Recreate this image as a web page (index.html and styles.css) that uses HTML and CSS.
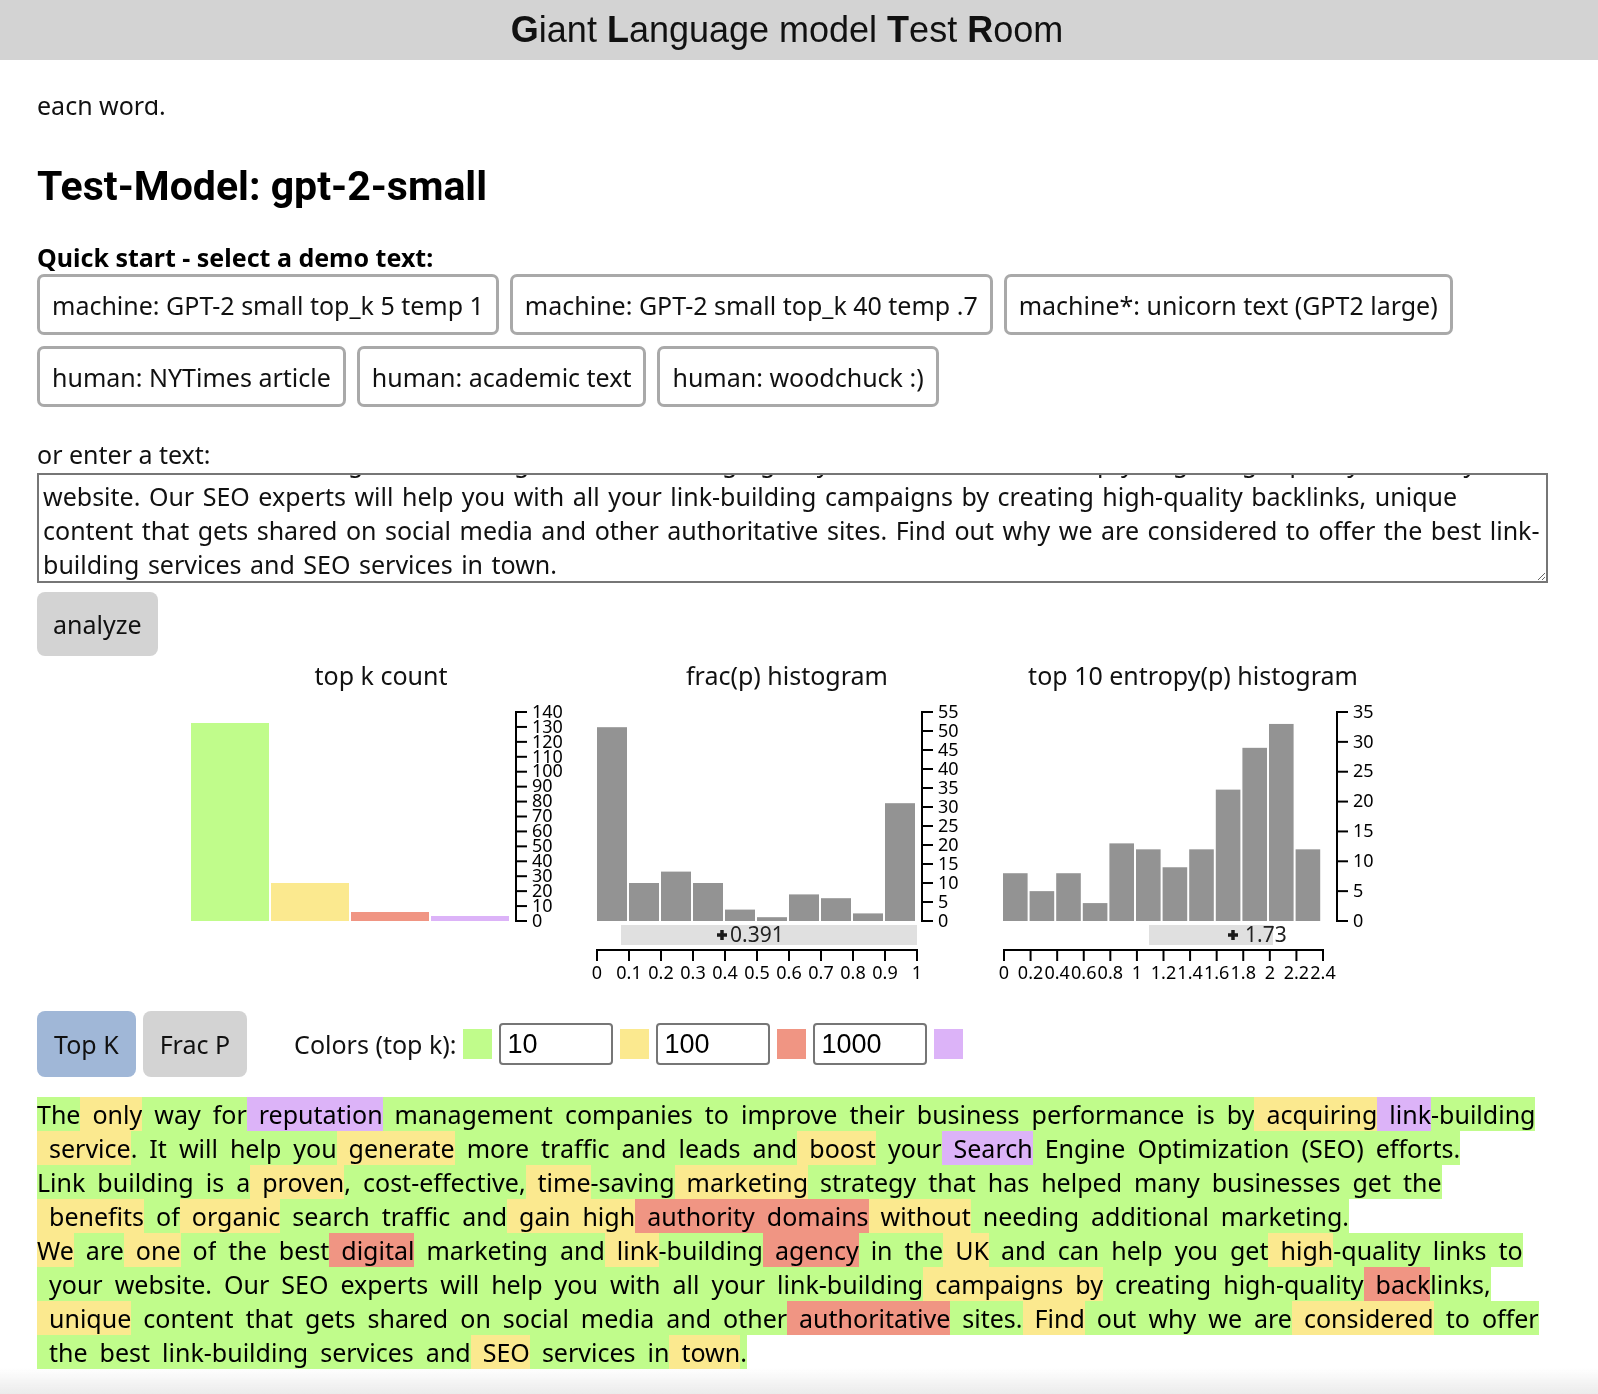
FILE: index.html
```html
<!DOCTYPE html>
<html lang="en">
<head>
<meta charset="utf-8">
<title>Giant Language model Test Room</title>
<link rel="stylesheet" href="styles.css">
</head>
<body>
<header class="top-bar"><h1 class="app-title"><b>G</b>iant <b>L</b>anguage model <b>T</b>est <b>R</b>oom</h1></header>

<main class="page">
  <div class="intro-clip"><p class="intro-text">each word.</p></div>

  <h2 class="model-title">Test-Model: gpt-2-small</h2>

  <div class="quick-label">Quick start - select a demo text:</div>
  <div class="demo-list">
    <button class="demo-btn">machine: GPT-2 small top_k 5 temp 1</button>
    <button class="demo-btn">machine: GPT-2 small top_k 40 temp .7</button>
    <button class="demo-btn">machine*: unicorn text (GPT2 large)</button>
    <button class="demo-btn">human: NYTimes article</button>
    <button class="demo-btn">human: academic text</button>
    <button class="demo-btn">human: woodchuck :)</button>
  </div>

  <div class="enter-label">or enter a text:</div>
  <textarea class="text-input">The only way for reputation management companies to improve their business performance is by acquiring link-building service. It will help you generate more traffic and leads and boost your Search Engine Optimization (SEO) efforts.
Link building is a proven, cost-effective, time-saving marketing strategy that has helped many businesses get the benefits of organic search traffic and gain high authority domains without needing additional marketing.
We are one of the best digital marketing and link-building agency in the UK and can help you get high-quality links to your website. Our SEO experts will help you with all your link-building campaigns by creating high-quality backlinks, unique content that gets shared on social media and other authoritative sites. Find out why we are considered to offer the best link-building services and SEO services in town.</textarea>
  <button class="analyze-btn">analyze</button>

  <section class="charts">
    <div class="chart">
      <div class="chart-title">top k count</div>
      <svg class="chart-svg" width="406" height="300" viewBox="0 0 406 300">
        <rect x="13" y="31" width="78" height="198" fill="#c0fc8b"/>
        <rect x="93" y="191" width="78" height="38" fill="#fbe98f"/>
        <rect x="173" y="220" width="78" height="9" fill="#f09583"/>
        <rect x="253" y="224" width="78" height="5" fill="#dcb3f8"/>
        <g class="axis" transform="translate(338,0)">
          <path d="M11,20H0V229H11"/>
          <line x2="11" y1="229" y2="229"/><text x="16" y="229" dy="0.32em">0</text>
          <line x2="11" y1="214.07" y2="214.07"/><text x="16" y="214.07" dy="0.32em">10</text>
          <line x2="11" y1="199.14" y2="199.14"/><text x="16" y="199.14" dy="0.32em">20</text>
          <line x2="11" y1="184.21" y2="184.21"/><text x="16" y="184.21" dy="0.32em">30</text>
          <line x2="11" y1="169.29" y2="169.29"/><text x="16" y="169.29" dy="0.32em">40</text>
          <line x2="11" y1="154.36" y2="154.36"/><text x="16" y="154.36" dy="0.32em">50</text>
          <line x2="11" y1="139.43" y2="139.43"/><text x="16" y="139.43" dy="0.32em">60</text>
          <line x2="11" y1="124.5" y2="124.5"/><text x="16" y="124.5" dy="0.32em">70</text>
          <line x2="11" y1="109.57" y2="109.57"/><text x="16" y="109.57" dy="0.32em">80</text>
          <line x2="11" y1="94.64" y2="94.64"/><text x="16" y="94.64" dy="0.32em">90</text>
          <line x2="11" y1="79.71" y2="79.71"/><text x="16" y="79.71" dy="0.32em">100</text>
          <line x2="11" y1="64.79" y2="64.79"/><text x="16" y="64.79" dy="0.32em">110</text>
          <line x2="11" y1="49.86" y2="49.86"/><text x="16" y="49.86" dy="0.32em">120</text>
          <line x2="11" y1="34.93" y2="34.93"/><text x="16" y="34.93" dy="0.32em">130</text>
          <line x2="11" y1="20" y2="20"/><text x="16" y="20" dy="0.32em">140</text>
        </g>
      </svg>
    </div>

    <div class="chart">
      <div class="chart-title">frac(p) histogram</div>
      <svg class="chart-svg" width="406" height="300" viewBox="0 0 406 300">
        <g class="bars">
          <rect x="13" y="35.2" width="30" height="193.8"/>
          <rect x="45" y="191" width="30" height="38"/>
          <rect x="77" y="179.6" width="30" height="49.4"/>
          <rect x="109" y="191" width="30" height="38"/>
          <rect x="141" y="217.6" width="30" height="11.4"/>
          <rect x="173" y="225.2" width="30" height="3.8"/>
          <rect x="205" y="202.4" width="30" height="26.6"/>
          <rect x="237" y="206.2" width="30" height="22.8"/>
          <rect x="269" y="221.4" width="30" height="7.6"/>
          <rect x="301" y="111.2" width="30" height="117.8"/>
        </g>
        <g class="axis" transform="translate(338,0)">
          <path d="M11,20H0V229H11"/>
          <line x2="11" y1="229" y2="229"/><text x="16" y="229" dy="0.32em">0</text>
          <line x2="11" y1="210" y2="210"/><text x="16" y="210" dy="0.32em">5</text>
          <line x2="11" y1="191" y2="191"/><text x="16" y="191" dy="0.32em">10</text>
          <line x2="11" y1="172" y2="172"/><text x="16" y="172" dy="0.32em">15</text>
          <line x2="11" y1="153" y2="153"/><text x="16" y="153" dy="0.32em">20</text>
          <line x2="11" y1="134" y2="134"/><text x="16" y="134" dy="0.32em">25</text>
          <line x2="11" y1="115" y2="115"/><text x="16" y="115" dy="0.32em">30</text>
          <line x2="11" y1="96" y2="96"/><text x="16" y="96" dy="0.32em">35</text>
          <line x2="11" y1="77" y2="77"/><text x="16" y="77" dy="0.32em">40</text>
          <line x2="11" y1="58" y2="58"/><text x="16" y="58" dy="0.32em">45</text>
          <line x2="11" y1="39" y2="39"/><text x="16" y="39" dy="0.32em">50</text>
          <line x2="11" y1="20" y2="20"/><text x="16" y="20" dy="0.32em">55</text>
        </g>
        <rect class="mean-bar" x="37" y="233" width="296" height="20"/>
        <path class="mean-mark" d="M136.25,238h3.5v3.25h3.25v3.5h-3.25v3.25h-3.5v-3.25h-3.25v-3.5h3.25z"/>
        <text class="mean-text" x="146" y="250">0.391</text>
        <g class="axis axis-x" transform="translate(0,258)">
          <path d="M13,11V0H333V11"/>
          <line x1="13" x2="13" y2="11"/><text x="13" y="16" dy="0.71em">0</text>
          <line x1="45" x2="45" y2="11"/><text x="45" y="16" dy="0.71em">0.1</text>
          <line x1="77" x2="77" y2="11"/><text x="77" y="16" dy="0.71em">0.2</text>
          <line x1="109" x2="109" y2="11"/><text x="109" y="16" dy="0.71em">0.3</text>
          <line x1="141" x2="141" y2="11"/><text x="141" y="16" dy="0.71em">0.4</text>
          <line x1="173" x2="173" y2="11"/><text x="173" y="16" dy="0.71em">0.5</text>
          <line x1="205" x2="205" y2="11"/><text x="205" y="16" dy="0.71em">0.6</text>
          <line x1="237" x2="237" y2="11"/><text x="237" y="16" dy="0.71em">0.7</text>
          <line x1="269" x2="269" y2="11"/><text x="269" y="16" dy="0.71em">0.8</text>
          <line x1="301" x2="301" y2="11"/><text x="301" y="16" dy="0.71em">0.9</text>
          <line x1="333" x2="333" y2="11"/><text x="333" y="16" dy="0.71em">1</text>
        </g>
      </svg>
    </div>

    <div class="chart">
      <div class="chart-title">top 10 entropy(p) histogram</div>
      <svg class="chart-svg" width="406" height="300" viewBox="0 0 406 300">
        <g class="bars">
          <rect x="13" y="181.23" width="24.6" height="47.77"/>
          <rect x="39.6" y="199.14" width="24.6" height="29.86"/>
          <rect x="66.2" y="181.23" width="24.6" height="47.77"/>
          <rect x="92.8" y="211.09" width="24.6" height="17.91"/>
          <rect x="119.4" y="151.37" width="24.6" height="77.63"/>
          <rect x="146" y="157.34" width="24.6" height="71.66"/>
          <rect x="172.6" y="175.26" width="24.6" height="53.74"/>
          <rect x="199.2" y="157.34" width="24.6" height="71.66"/>
          <rect x="225.8" y="97.63" width="24.6" height="131.37"/>
          <rect x="252.4" y="55.83" width="24.6" height="173.17"/>
          <rect x="279" y="31.94" width="24.6" height="197.06"/>
          <rect x="305.6" y="157.34" width="24.6" height="71.66"/>
        </g>
        <g class="axis" transform="translate(347,0)">
          <path d="M11,20H0V229H11"/>
          <line x2="11" y1="229" y2="229"/><text x="16" y="229" dy="0.32em">0</text>
          <line x2="11" y1="199.14" y2="199.14"/><text x="16" y="199.14" dy="0.32em">5</text>
          <line x2="11" y1="169.29" y2="169.29"/><text x="16" y="169.29" dy="0.32em">10</text>
          <line x2="11" y1="139.43" y2="139.43"/><text x="16" y="139.43" dy="0.32em">15</text>
          <line x2="11" y1="109.57" y2="109.57"/><text x="16" y="109.57" dy="0.32em">20</text>
          <line x2="11" y1="79.71" y2="79.71"/><text x="16" y="79.71" dy="0.32em">25</text>
          <line x2="11" y1="49.86" y2="49.86"/><text x="16" y="49.86" dy="0.32em">30</text>
          <line x2="11" y1="20" y2="20"/><text x="16" y="20" dy="0.32em">35</text>
        </g>
        <rect class="mean-bar" x="159" y="233" width="124" height="20"/>
        <path class="mean-mark" d="M241.25,238h3.5v3.25h3.25v3.5h-3.25v3.25h-3.5v-3.25h-3.25v-3.5h3.25z"/>
        <text class="mean-text" x="255" y="250">1.73</text>
        <g class="axis axis-x" transform="translate(0,258)">
          <path d="M14,11V0H333V11"/>
          <line x1="14" x2="14" y2="11"/><text x="14" y="16" dy="0.71em">0</text>
          <line x1="40.58" x2="40.58" y2="11"/><text x="40.58" y="16" dy="0.71em">0.2</text>
          <line x1="67.17" x2="67.17" y2="11"/><text x="67.17" y="16" dy="0.71em">0.4</text>
          <line x1="93.75" x2="93.75" y2="11"/><text x="93.75" y="16" dy="0.71em">0.6</text>
          <line x1="120.33" x2="120.33" y2="11"/><text x="120.33" y="16" dy="0.71em">0.8</text>
          <line x1="146.92" x2="146.92" y2="11"/><text x="146.92" y="16" dy="0.71em">1</text>
          <line x1="173.5" x2="173.5" y2="11"/><text x="173.5" y="16" dy="0.71em">1.2</text>
          <line x1="200.08" x2="200.08" y2="11"/><text x="200.08" y="16" dy="0.71em">1.4</text>
          <line x1="226.67" x2="226.67" y2="11"/><text x="226.67" y="16" dy="0.71em">1.6</text>
          <line x1="253.25" x2="253.25" y2="11"/><text x="253.25" y="16" dy="0.71em">1.8</text>
          <line x1="279.83" x2="279.83" y2="11"/><text x="279.83" y="16" dy="0.71em">2</text>
          <line x1="306.42" x2="306.42" y2="11"/><text x="306.42" y="16" dy="0.71em">2.2</text>
          <line x1="333" x2="333" y2="11"/><text x="333" y="16" dy="0.71em">2.4</text>
        </g>
      </svg>
    </div>
  </section>

  <div class="mode-row">
    <button class="mode-btn active">Top K</button>
    <button class="mode-btn">Frac P</button>
    <div class="legend">
      <span class="legend-label">Colors (top k):</span>
      <span class="swatch sw-g"></span>
      <input class="thresh" type="text" value="10">
      <span class="swatch sw-y"></span>
      <input class="thresh" type="text" value="100">
      <span class="swatch sw-r"></span>
      <input class="thresh" type="text" value="1000">
      <span class="swatch sw-p"></span>
    </div>
  </div>

  <div class="tokens">
<span class="t g">The</span><span class="t y"> only</span><span class="t g"> way</span><span class="t g"> for</span><span class="t p"> reputation</span><span class="t g"> management</span><span class="t g"> companies</span><span class="t g"> to</span><span class="t g"> improve</span><span class="t g"> their</span><span class="t g"> business</span><span class="t g"> performance</span><span class="t g"> is</span><span class="t g"> by</span><span class="t y"> acquiring</span><span class="t p"> link</span><span class="t g">-building</span><br>
<span class="t y"> service</span><span class="t g">.</span><span class="t g"> It</span><span class="t g"> will</span><span class="t g"> help</span><span class="t g"> you</span><span class="t y"> generate</span><span class="t g"> more</span><span class="t g"> traffic</span><span class="t g"> and</span><span class="t g"> leads</span><span class="t g"> and</span><span class="t y"> boost</span><span class="t g"> your</span><span class="t p"> Search</span><span class="t g"> Engine</span><span class="t g"> Optimization</span><span class="t g"> (</span><span class="t g">SEO</span><span class="t g">)</span><span class="t g"> efforts</span><span class="t g">.</span><br>
<span class="t g">Link</span><span class="t g"> building</span><span class="t g"> is</span><span class="t g"> a</span><span class="t y"> proven</span><span class="t g">,</span><span class="t g"> cost</span><span class="t g">-</span><span class="t g">effective</span><span class="t g">,</span><span class="t y"> time</span><span class="t g">-</span><span class="t g">saving</span><span class="t y"> marketing</span><span class="t g"> strategy</span><span class="t g"> that</span><span class="t g"> has</span><span class="t g"> helped</span><span class="t g"> many</span><span class="t g"> businesses</span><span class="t g"> get</span><span class="t g"> the</span><br>
<span class="t y"> benefits</span><span class="t g"> of</span><span class="t y"> organic</span><span class="t g"> search</span><span class="t g"> traffic</span><span class="t g"> and</span><span class="t y"> gain</span><span class="t y"> high</span><span class="t r"> authority</span><span class="t r"> domains</span><span class="t y"> without</span><span class="t g"> needing</span><span class="t g"> additional</span><span class="t g"> marketing</span><span class="t g">.</span><br>
<span class="t y">We</span><span class="t g"> are</span><span class="t y"> one</span><span class="t g"> of</span><span class="t g"> the</span><span class="t g"> best</span><span class="t r"> digital</span><span class="t g"> marketing</span><span class="t g"> and</span><span class="t y"> link</span><span class="t g">-</span><span class="t g">building</span><span class="t r"> agency</span><span class="t g"> in</span><span class="t g"> the</span><span class="t y"> UK</span><span class="t g"> and</span><span class="t g"> can</span><span class="t g"> help</span><span class="t g"> you</span><span class="t g"> get</span><span class="t y"> high</span><span class="t g">-</span><span class="t g">quality</span><span class="t g"> links</span><span class="t g"> to</span><br>
<span class="t g"> your</span><span class="t g"> website</span><span class="t g">.</span><span class="t g"> Our</span><span class="t g"> SEO</span><span class="t g"> experts</span><span class="t g"> will</span><span class="t g"> help</span><span class="t g"> you</span><span class="t g"> with</span><span class="t g"> all</span><span class="t g"> your</span><span class="t g"> link</span><span class="t g">-</span><span class="t g">building</span><span class="t y"> campaigns</span><span class="t y"> by</span><span class="t g"> creating</span><span class="t g"> high</span><span class="t g">-</span><span class="t g">quality</span><span class="t r"> back</span><span class="t g">links</span><span class="t g">,</span><br>
<span class="t y"> unique</span><span class="t g"> content</span><span class="t g"> that</span><span class="t g"> gets</span><span class="t g"> shared</span><span class="t g"> on</span><span class="t g"> social</span><span class="t g"> media</span><span class="t g"> and</span><span class="t g"> other</span><span class="t r"> authoritative</span><span class="t g"> sites</span><span class="t g">.</span><span class="t y"> Find</span><span class="t g"> out</span><span class="t g"> why</span><span class="t g"> we</span><span class="t g"> are</span><span class="t y"> considered</span><span class="t g"> to</span><span class="t g"> offer</span><br>
<span class="t g"> the</span><span class="t g"> best</span><span class="t g"> link</span><span class="t g">-</span><span class="t g">building</span><span class="t g"> services</span><span class="t g"> and</span><span class="t y"> SEO</span><span class="t g"> services</span><span class="t g"> in</span><span class="t y"> town</span><span class="t g">.</span>
  </div>
</main>

<div class="bottom-fade"></div>
<script src="script.js"></script>
</body>
</html>
```

FILE: styles.css
```css
html, body {
  margin: 0;
  padding: 0;
  background: #fff;
}

body {
  font-family: "Noto Sans", Roboto, sans-serif;
  font-size: 25px;
  line-height: 34px;
  color: #111;
  overflow: hidden;
}

.top-bar {
  height: 60px;
  background: #d3d3d3;
  display: flex;
  align-items: center;
  justify-content: center;
  padding-right: 24px;
}

.app-title {
  margin: 0;
  font-family: "Liberation Sans", Arial, sans-serif;
  font-size: 36px;
  font-weight: 400;
  line-height: 40px;
  color: #111;
}

.app-title b {
  font-weight: 700;
}

.page {
  padding: 0 50px 0 37px;
}

.intro-clip {
  margin-top: 40px;
  height: 22px;
  overflow: hidden;
  display: flex;
  align-items: flex-end;
}

.intro-text {
  margin: 0;
  flex-shrink: 0;
  line-height: 34px;
}

.model-title {
  margin: 39px 0 0;
  font-family: Roboto, "Noto Sans", sans-serif;
  font-size: 41px;
  font-weight: 700;
  line-height: 50px;
  color: #000;
}

.quick-label {
  margin-top: 29px;
  font-weight: 700;
  color: #000;
}

.demo-list {
  display: flex;
  flex-wrap: wrap;
  gap: 11px;
}

.demo-btn {
  height: 61px;
  padding: 0 12px;
  border: 3px solid #a9a9a9;
  border-radius: 7px;
  background: #fff;
  font: inherit;
  color: #111;
}

.enter-label {
  margin-top: 30px;
}

.text-input {
  display: block;
  box-sizing: border-box;
  width: 100%;
  height: 110px;
  margin-top: 2px;
  padding: 2px 4px 0;
  border: 2px solid #767676;
  border-radius: 0;
  font: inherit;
  line-height: 34px;
  word-spacing: 2px;
  color: #111;
}

.analyze-btn {
  display: block;
  height: 64px;
  margin-top: 9px;
  padding: 0 16px;
  border: none;
  border-radius: 8px;
  background: #d3d3d3;
  font: inherit;
  color: #111;
}

.charts {
  display: flex;
  margin-top: 2px;
  padding-left: 141px;
}

.chart {
  width: 406px;
  display: flex;
  flex-direction: column;
  align-items: center;
}

.chart-title {
  height: 34px;
  line-height: 34px;
  color: #111;
}

.chart-svg {
  display: block;
  font-family: "Noto Sans", Roboto, sans-serif;
  font-size: 18px;
}

.chart-svg .bars rect {
  fill: #939393;
}

.axis path,
.axis line {
  fill: none;
  stroke: #000;
  stroke-width: 2;
}

.axis text {
  fill: #000;
}

.axis-x text {
  text-anchor: middle;
}

.mean-bar {
  fill: #e0e0e0;
}

.mean-mark {
  fill: #1a1a1a;
}

.mean-text {
  fill: #222;
  font-size: 21px;
}

.mode-row {
  display: flex;
  align-items: center;
  gap: 7px;
  height: 66px;
  margin-top: 19px;
}

.mode-btn {
  height: 66px;
  padding: 0 17px;
  border: none;
  border-radius: 8px;
  background: #d3d3d3;
  font: inherit;
  color: #111;
}

.mode-btn.active {
  background: #a0b7d7;
}

.legend {
  display: flex;
  align-items: center;
  gap: 7px;
  margin-left: 40px;
}

.swatch {
  display: block;
  width: 29px;
  height: 30px;
}

.sw-g { background: #c0fc8b; }
.sw-y { background: #fbe98f; }
.sw-r { background: #f09583; }
.sw-p { background: #dcb3f8; }

.thresh {
  box-sizing: border-box;
  width: 114px;
  height: 42px;
  padding: 0 6px;
  border: 2px solid #767676;
  border-radius: 4px;
  font-family: "Liberation Sans", Arial, sans-serif;
  font-size: 27px;
  color: #000;
}

.tokens {
  margin-top: 20px;
  white-space: nowrap;
  line-height: 34px;
  color: #000;
}

.t {
  display: inline-block;
  vertical-align: top;
  height: 34px;
  white-space: pre;
  word-spacing: 5.5px;
}

.t.g { background: #c0fc8b; }
.t.y { background: #fbe98f; }
.t.r { background: #f09583; }
.t.p { background: #dcb3f8; }

.bottom-fade {
  position: fixed;
  left: 0;
  right: 0;
  bottom: 0;
  height: 26px;
  background: linear-gradient(to bottom, rgba(255, 255, 255, 0), #ebebeb);
  pointer-events: none;
}
```

FILE: script.js
```js
var area = document.querySelector('.text-input');
if (area) {
  area.scrollTop = area.scrollHeight;
}
```
